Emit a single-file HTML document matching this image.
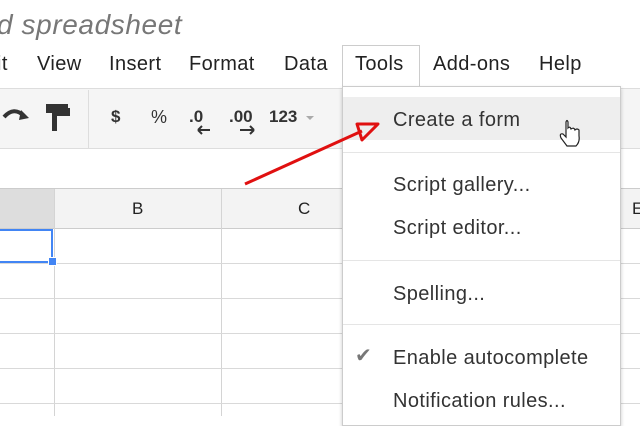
<!DOCTYPE html>
<html><head><style>
*{margin:0;padding:0;box-sizing:border-box}
body{width:640px;height:416px;overflow:hidden;background:#fff;font-family:"Liberation Sans",Arial,sans-serif;position:relative}
.a{position:absolute}
.title{left:-3px;top:9px;font-size:28px;font-style:italic;color:#777;letter-spacing:0.6px}
.mb{top:53px;font-size:20px;color:#222;letter-spacing:0.4px}
.tb{left:0;top:88px;width:640px;height:61px;background:#f5f5f5;border-top:1px solid #ddd;border-bottom:1px solid #ddd}
.ti{font-size:17px;color:#333;font-weight:bold;top:107px}
.hl{left:0;width:640px;height:1px;background:#d9d9d9}
.vl{width:1px;background:#d4d4d4}
.menu{left:342px;top:86px;width:279px;height:340px;background:#fff;border:1px solid #ccc;box-shadow:0 2px 4px rgba(0,0,0,.2)}
.mi{left:50px;font-size:20px;color:#333;letter-spacing:0.4px}
.sep{left:0;width:277px;height:1px;background:#e5e5e5}
</style></head><body>
<div class="a title">d spreadsheet</div>
<div class="a mb" style="left:-3px">it</div>
<div class="a mb" style="left:37px">View</div>
<div class="a mb" style="left:109px">Insert</div>
<div class="a mb" style="left:189px">Format</div>
<div class="a mb" style="left:284px">Data</div>
<div class="a mb" style="left:433px">Add-ons</div>
<div class="a mb" style="left:539px">Help</div>
<div class="a tb"></div>
<div class="a" style="left:88px;top:90px;width:1px;height:58px;background:#ddd"></div>
<svg class="a" style="left:0;top:100px" width="80" height="40">
<path d="M4 17 Q14 6 24 16" stroke="#333" stroke-width="4" fill="none"/><path d="M21 10 L29 18 L19 20Z" fill="#333"/>
<rect x="46" y="4" width="22" height="9" fill="#333"/><rect x="67" y="8" width="3" height="8" fill="#333"/><rect x="52" y="13" width="16" height="3" fill="#333"/><rect x="52" y="15" width="5" height="16" fill="#333"/>
</svg>
<div class="a ti" style="left:111px">$</div>
<div class="a ti" style="left:151px;font-weight:normal;font-size:18px">%</div>
<div class="a ti" style="left:189px">.0</div>
<div class="a ti" style="left:229px">.00</div>
<svg class="a" style="left:195px;top:124px" width="70" height="12">
<path d="M3 6 h12 M3 6 l4 -4 M3 6 l4 4" stroke="#333" stroke-width="2" fill="none"/>
<path d="M45 6 h14 M59 6 l-4 -4 M59 6 l-4 4" stroke="#333" stroke-width="2" fill="none"/>
</svg>
<div class="a ti" style="left:269px">123</div>
<div class="a" style="left:306px;top:116px;border:4px solid transparent;border-top-color:#aaa"></div>
<div class="a" style="left:0;top:188px;width:640px;height:41px;background:#f3f3f3;border-top:1px solid #ccc;border-bottom:1px solid #ccc"></div>
<div class="a" style="left:0;top:189px;width:54px;height:39px;background:#ddd"></div>
<div class="a" style="left:132px;top:199px;font-size:17px;color:#222">B</div>
<div class="a" style="left:298px;top:199px;font-size:17px;color:#222">C</div>
<div class="a" style="left:632px;top:199px;font-size:17px;color:#222">E</div>
<div class="a vl" style="left:54px;top:189px;height:227px"></div>
<div class="a vl" style="left:221px;top:189px;height:227px"></div>
<div class="a hl" style="top:263px"></div>
<div class="a hl" style="top:298px"></div>
<div class="a hl" style="top:333px"></div>
<div class="a hl" style="top:368px"></div>
<div class="a hl" style="top:403px"></div>
<div class="a" style="left:-2px;top:229px;width:55px;height:34px;border:2px solid #4285f4"></div>
<div class="a" style="left:48px;top:257px;width:9px;height:9px;background:#4285f4;border:1px solid #fff"></div>
<div class="a" style="left:342px;top:45px;width:78px;height:42px;border:1px solid #ccc;border-bottom:none;background:#fff"></div>
<div class="a mb" style="left:355px">Tools</div>
<div class="a menu">
<div class="a" style="left:0;top:10px;width:277px;height:43px;background:#eee"></div>
<div class="a mi" style="top:22px">Create a form</div>
<div class="a sep" style="top:65px"></div>
<div class="a mi" style="top:87px">Script gallery...</div>
<div class="a mi" style="top:130px">Script editor...</div>
<div class="a sep" style="top:173px"></div>
<div class="a mi" style="top:196px">Spelling...</div>
<div class="a sep" style="top:237px"></div>
<div class="a" style="left:12px;top:256px;font-size:20px;color:#777">✔</div>
<div class="a mi" style="top:260px">Enable autocomplete</div>
<div class="a mi" style="top:303px">Notification rules...</div>
</div>
<svg class="a" style="left:0;top:0" width="640" height="416">
<line x1="245" y1="184" x2="362" y2="131" stroke="#e01010" stroke-width="3"/>
<path d="M357 124 L378 124 L362 140 Z" fill="none" stroke="#e01010" stroke-width="3" stroke-linejoin="round"/>
<path d="M566 122 v15 l-3 -3 q-4 -1 -2 4 l6 8 h9 q4 -4 3 -10 v-6 q-2 -2 -4 0 q-1 -3 -4 -1 q-1 -3 -3 -1 v-6 q-1 -3 -2 0z" fill="#fff" stroke="#222" stroke-width="1.2"/>
</svg>
</body></html>
